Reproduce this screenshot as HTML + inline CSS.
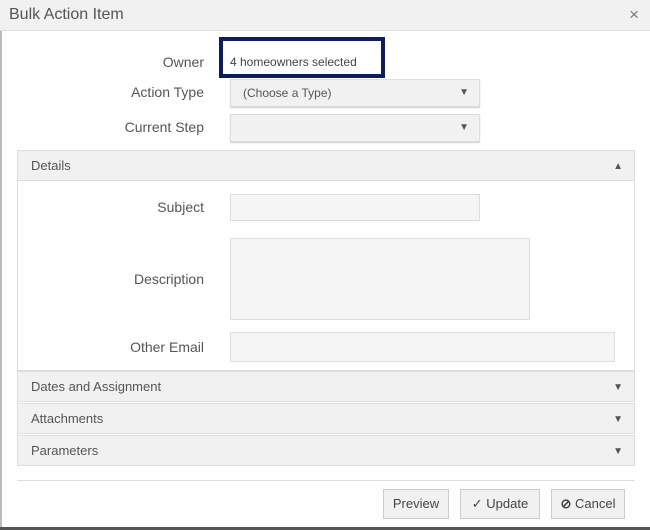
<!DOCTYPE html>
<html><head><style>
body{margin:0;width:650px;height:530px;background:#555;font-family:"Liberation Sans",sans-serif;overflow:hidden;position:relative;color:#444}
.dlg{position:absolute;left:0;top:0;width:650px;height:527px;background:#fff;border-left:2px solid #bbb;box-sizing:border-box}
.a{position:absolute;box-sizing:border-box}
.lbl{position:absolute;text-align:right;width:204px;left:0;font-size:14px;color:#555}
.sel{background:#f1f1f1;border:1px solid #ddd;box-shadow:0 1px 1px #ccc}
.inp{background:#f5f5f5;border:1px solid #ddd}
.hdr{left:17px;width:618px;height:31px;background:#f1f1f1;border:1px solid #ddd;font-size:13px;color:#555;padding:7px 0 0 13px}
.arr{position:absolute;right:11px;top:10px;font-size:10px;color:#555}
.btn{position:absolute;top:489px;height:30px;background:#f1f1f1;border:1px solid #ccc;box-sizing:border-box;font-size:13px;color:#444;text-align:center;line-height:28px}
</style></head><body>
<div class="dlg"></div>
<div class="a" style="left:0;top:0;width:650px;height:31px;background:#f1f1f1;border-bottom:1px solid #ddd;font-size:16px;color:#555;padding:6px 0 0 9px">Bulk Action Item<span style="position:absolute;right:11px;top:5px;font-size:17px;color:#777">×</span></div>
<div class="lbl" style="top:54px">Owner</div>
<div class="a" style="left:219px;top:37px;width:166px;height:41px;border:4px solid #0c1c5c;font-size:12px;color:#444;padding:14px 0 0 7px">4 homeowners selected</div>
<div class="lbl" style="top:84px">Action Type</div>
<div class="a sel" style="left:230px;top:79px;width:250px;height:28px;font-size:12px;color:#555;padding:6px 0 0 12px">(Choose a Type)<span class="arr" style="top:7px;right:10px">▼</span></div>
<div class="lbl" style="top:119px">Current Step</div>
<div class="a sel" style="left:230px;top:114px;width:250px;height:28px"><span class="arr" style="top:7px;right:10px">▼</span></div>
<div class="a" style="left:17px;top:150px;width:618px;height:221px;border:1px solid #ddd"></div>
<div class="a hdr" style="top:150px">Details<span class="arr">▲</span></div>
<div class="lbl" style="top:199px">Subject</div>
<div class="a inp" style="left:230px;top:194px;width:250px;height:27px"></div>
<div class="lbl" style="top:271px">Description</div>
<div class="a inp" style="left:230px;top:238px;width:300px;height:82px"></div>
<div class="lbl" style="top:339px">Other Email</div>
<div class="a inp" style="left:230px;top:332px;width:385px;height:30px"></div>
<div class="a hdr" style="top:371px">Dates and Assignment<span class="arr">▼</span></div>
<div class="a hdr" style="top:403px">Attachments<span class="arr">▼</span></div>
<div class="a hdr" style="top:435px">Parameters<span class="arr">▼</span></div>
<div class="a" style="left:17px;top:480px;width:618px;height:1px;background:#ddd"></div>
<div class="btn" style="left:383px;width:66px">Preview</div>
<div class="btn" style="left:460px;width:80px">✓ Update</div>
<div class="btn" style="left:551px;width:74px"><span style="font-weight:bold">⊘</span> Cancel</div>
</body></html>
